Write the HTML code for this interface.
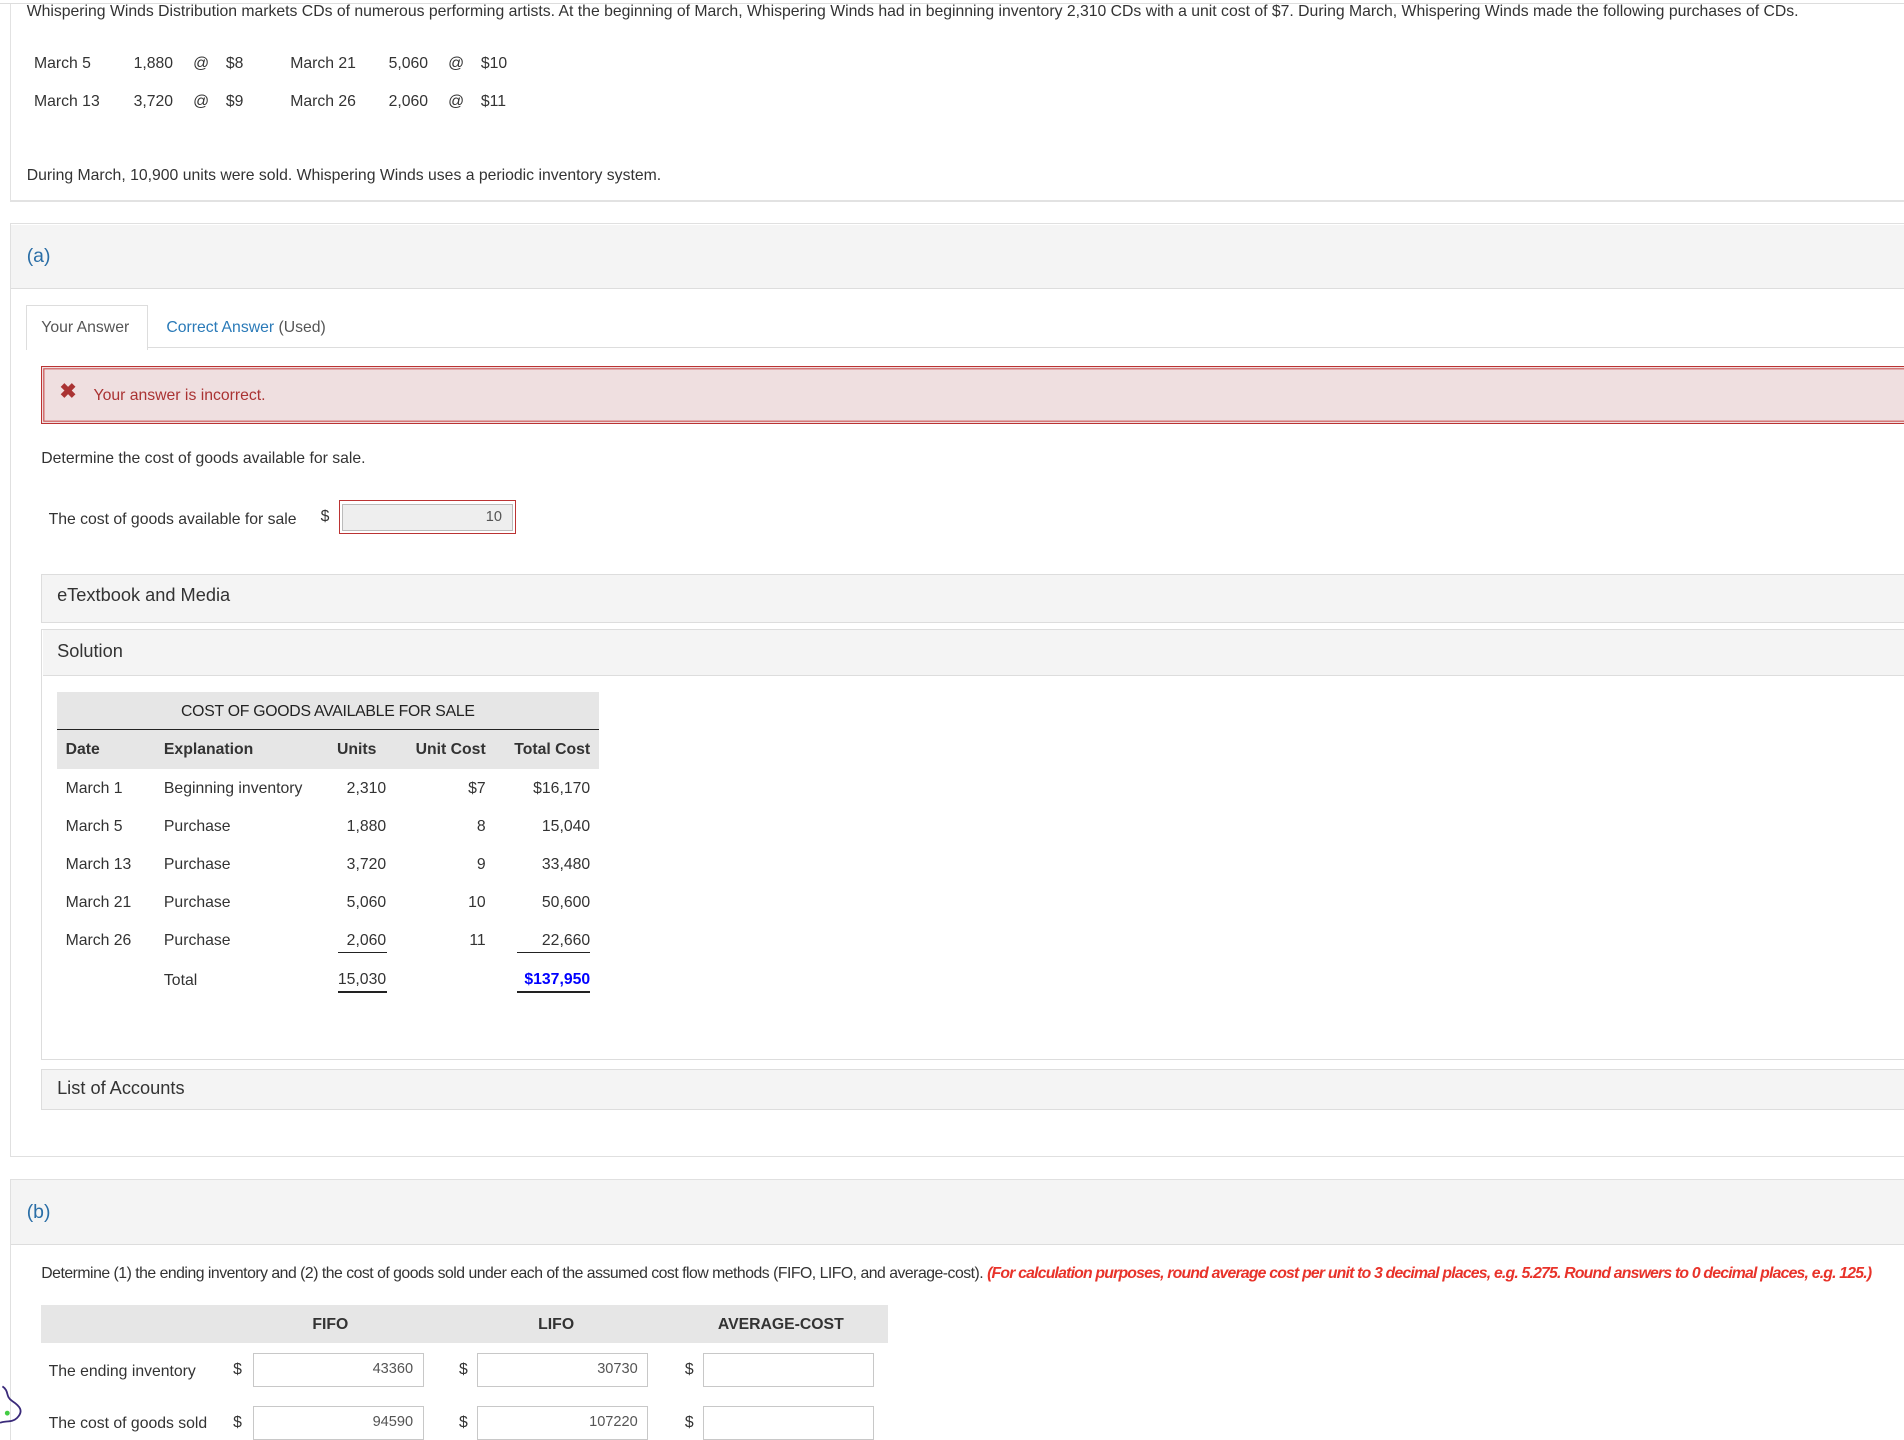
<!DOCTYPE html>
<html><head><meta charset="utf-8"><style>
html,body{margin:0;padding:0;background:#fff;overflow:hidden;}
body{width:1904px;height:1440px;overflow:hidden;position:relative;}
#z{zoom:1.21429;position:relative;width:1568px;height:1186px;overflow:hidden;font-family:"Liberation Sans",sans-serif;font-size:13px;color:#333;letter-spacing:0;}
.t{position:absolute;white-space:nowrap;line-height:18px;margin-top:1px;}
.r{text-align:right;}
.box{position:absolute;box-sizing:border-box;}
.inp{position:absolute;box-sizing:border-box;border:1px solid #c8c8c8;background:#fff;height:28px;font-size:12px;color:#555;text-align:right;padding-right:8px;line-height:26px;}
.b{font-weight:bold;}
</style></head><body><div id="z">
<div class="box" style="left:0;top:0;width:1568px;height:3px;border-bottom:1px solid #ddd"></div>
<div class="box" style="left:8px;top:3px;width:1560px;height:163px;border-left:1px solid #e2e2e2;border-bottom:2px solid #e2e2e2;"></div>
<div class="t" style="left:22px;top:0px">Whispering Winds Distribution markets CDs of numerous performing artists. At the beginning of March, Whispering Winds had in beginning inventory 2,310 CDs with a unit cost of $7. During March, Whispering Winds made the following purchases of CDs.</div>
<div class="t" style="left:28px;top:43px">March 5</div><div class="t" style="left:110px;top:43px">1,880</div><div class="t" style="left:159px;top:43px">@</div><div class="t" style="left:186px;top:43px">$8</div>
<div class="t" style="left:239px;top:43px">March 21</div><div class="t" style="left:320px;top:43px">5,060</div><div class="t" style="left:369px;top:43px">@</div><div class="t" style="left:396px;top:43px">$10</div>
<div class="t" style="left:28px;top:74px">March 13</div><div class="t" style="left:110px;top:74px">3,720</div><div class="t" style="left:159px;top:74px">@</div><div class="t" style="left:186px;top:74px">$9</div>
<div class="t" style="left:239px;top:74px">March 26</div><div class="t" style="left:320px;top:74px">2,060</div><div class="t" style="left:369px;top:74px">@</div><div class="t" style="left:396px;top:74px">$11</div>
<div class="t" style="left:22px;top:135px">During March, 10,900 units were sold. Whispering Winds uses a periodic inventory system.</div>

<div class="box" style="left:8px;top:184px;width:1560px;height:769px;border:1px solid #e0e0e0;border-right:none;"></div>
<div class="box" style="left:9px;top:185px;width:1559px;height:53px;background:#f4f4f4;border-bottom:1px solid #ddd"></div>
<div class="t" style="left:22px;top:202px;font-size:16px;color:#2a6ea6">(a)</div>
<div class="box" style="left:21px;top:286px;width:1547px;border-top:1px solid #ddd"></div>
<div class="box" style="left:21px;top:251px;width:101px;height:37px;border:1px solid #ddd;border-bottom:none;background:#fff"></div>
<div class="t" style="left:34px;top:260px;color:#555">Your Answer</div>
<div class="t" style="left:137px;top:260px;color:#2a7ab8">Correct Answer <span style="color:#555">(Used)</span></div>
<div class="box" style="left:34px;top:301px;width:1540px;height:48px;border:1px solid #b33;background:#efdfe0;box-shadow:inset 0 0 0 1px #efdfe0,inset 0 0 0 2px #c55;"></div>
<div class="t" style="left:49px;top:313px;font-size:17px;color:#a33;font-weight:bold">✖</div>
<div class="t" style="left:77px;top:316px;color:#a33">Your answer is incorrect.</div>
<div class="t" style="left:34px;top:368px">Determine the cost of goods available for sale.</div>
<div class="t" style="left:40px;top:418px">The cost of goods available for sale</div>
<div class="t" style="left:264px;top:416px">$</div>
<div class="box" style="left:279px;top:412px;width:146px;height:28px;border:1px solid #b33;padding:2px;"><div style="border:1px solid #bbb;background:#eee;height:100%;box-sizing:border-box;text-align:right;padding-right:8px;font-size:12px;line-height:20px;color:#555">10</div></div>

<div class="box" style="left:34px;top:473px;width:1540px;height:40px;background:#f4f4f4;border:1px solid #ddd"></div>
<div class="t" style="left:47px;top:481px;font-size:15px">eTextbook and Media</div>
<div class="box" style="left:34px;top:518px;width:1540px;height:355px;border:1px solid #ddd"></div>
<div class="box" style="left:35px;top:519px;width:1540px;height:38px;background:#f4f4f4;border-bottom:1px solid #ddd"></div>
<div class="t" style="left:47px;top:527px;font-size:15px">Solution</div>

<div class="box" style="left:47px;top:570px;width:446px;height:63px;background:#e6e6e6"></div>
<div class="box" style="left:47px;top:600px;width:446px;border-top:1.5px solid #222"></div>
<div class="t b" style="left:47px;width:446px;text-align:center;top:576px;font-weight:normal;color:#222;letter-spacing:-0.2px">COST OF GOODS AVAILABLE FOR SALE</div>
<div class="t b" style="left:54px;top:608px">Date</div><div class="t b" style="left:135px;top:608px">Explanation</div>
<div class="t b r" style="left:250px;width:60px;top:608px">Units</div><div class="t b r" style="left:320px;width:80px;top:608px">Unit Cost</div><div class="t b r" style="left:406px;width:80px;top:608px">Total Cost</div>

<div class="t" style="left:54px;top:640px">March 1</div><div class="t" style="left:135px;top:640px">Beginning inventory</div><div class="t r" style="left:258px;width:60px;top:640px">2,310</div><div class="t r" style="left:340px;width:60px;top:640px">$7</div><div class="t r" style="left:406px;width:80px;top:640px">$16,170</div>
<div class="t" style="left:54px;top:671px">March 5</div><div class="t" style="left:135px;top:671px">Purchase</div><div class="t r" style="left:258px;width:60px;top:671px">1,880</div><div class="t r" style="left:340px;width:60px;top:671px">8</div><div class="t r" style="left:406px;width:80px;top:671px">15,040</div>
<div class="t" style="left:54px;top:702px">March 13</div><div class="t" style="left:135px;top:702px">Purchase</div><div class="t r" style="left:258px;width:60px;top:702px">3,720</div><div class="t r" style="left:340px;width:60px;top:702px">9</div><div class="t r" style="left:406px;width:80px;top:702px">33,480</div>
<div class="t" style="left:54px;top:734px">March 21</div><div class="t" style="left:135px;top:734px">Purchase</div><div class="t r" style="left:258px;width:60px;top:734px">5,060</div><div class="t r" style="left:340px;width:60px;top:734px">10</div><div class="t r" style="left:406px;width:80px;top:734px">50,600</div>
<div class="t" style="left:54px;top:765px">March 26</div><div class="t" style="left:135px;top:765px">Purchase</div><div class="t r" style="left:258px;width:60px;top:765px">2,060</div><div class="t r" style="left:340px;width:60px;top:765px">11</div><div class="t r" style="left:406px;width:80px;top:765px">22,660</div>
<div class="box" style="left:278px;top:784px;width:41px;border-top:1px solid #222"></div>
<div class="box" style="left:426px;top:784px;width:60px;border-top:1px solid #222"></div>
<div class="t" style="left:135px;top:798px">Total</div><div class="t r" style="left:258px;width:60px;top:797px">15,030</div><div class="t r b" style="left:406px;width:80px;top:797px;color:#00f">$137,950</div>
<div class="box" style="left:278px;top:816px;width:41px;border-top:2px solid #222"></div>
<div class="box" style="left:426px;top:816px;width:60px;border-top:2px solid #222"></div>

<div class="box" style="left:34px;top:880px;width:1540px;height:34px;background:#f4f4f4;border:1px solid #ddd"></div>
<div class="t" style="left:47px;top:887px;font-size:15px">List of Accounts</div>

<div class="box" style="left:8px;top:971px;width:1560px;height:215px;border-left:1px solid #e0e0e0;border-top:1px solid #e0e0e0;"></div>
<div class="box" style="left:9px;top:972px;width:1559px;height:53px;background:#f4f4f4;border-bottom:1px solid #ddd"></div>
<div class="t" style="left:22px;top:989px;font-size:16px;color:#2a6ea6">(b)</div>
<div class="t" style="left:34px;top:1039px;letter-spacing:-0.4px">Determine (1) the ending inventory and (2) the cost of goods sold under each of the assumed cost flow methods (FIFO, LIFO, and average-cost). <i class="b" style="color:#e8332a;letter-spacing:-0.65px">(For calculation purposes, round average cost per unit to 3 decimal places, e.g. 5.275. Round answers to 0 decimal places, e.g. 125.)</i></div>
<div class="box" style="left:34px;top:1075px;width:697px;height:31px;background:#e6e6e6"></div>
<div class="t b" style="left:212px;width:120px;text-align:center;top:1081px">FIFO</div>
<div class="t b" style="left:398px;width:120px;text-align:center;top:1081px">LIFO</div>
<div class="t b" style="left:573px;width:140px;text-align:center;top:1081px">AVERAGE-COST</div>
<div class="t" style="left:40px;top:1120px">The ending inventory</div>
<div class="t" style="left:40px;top:1163px">The cost of goods sold</div>
<div class="t" style="left:192px;top:1118px">$</div><div class="t" style="left:378px;top:1118px">$</div><div class="t" style="left:564px;top:1118px">$</div>
<div class="t" style="left:192px;top:1162px">$</div><div class="t" style="left:378px;top:1162px">$</div><div class="t" style="left:564px;top:1162px">$</div>
<div class="inp" style="left:208px;top:1114px;width:141px">43360</div>
<div class="inp" style="left:393px;top:1114px;width:141px">30730</div>
<div class="inp" style="left:579px;top:1114px;width:141px"></div>
<div class="inp" style="left:208px;top:1158px;width:141px">94590</div>
<div class="inp" style="left:393px;top:1158px;width:141px">107220</div>
<div class="inp" style="left:579px;top:1158px;width:141px"></div>
<svg style="position:absolute;left:0;top:1140px" width="20" height="40"><path d="M2 2 C8 6,4 10,10 14 C16 18,20 22,14 28 C10 32,4 30,0 32" fill="none" stroke="#3a2a7a" stroke-width="1.5"/><circle cx="6" cy="24" r="2" fill="#4c4"/></svg>
</div></body></html>
